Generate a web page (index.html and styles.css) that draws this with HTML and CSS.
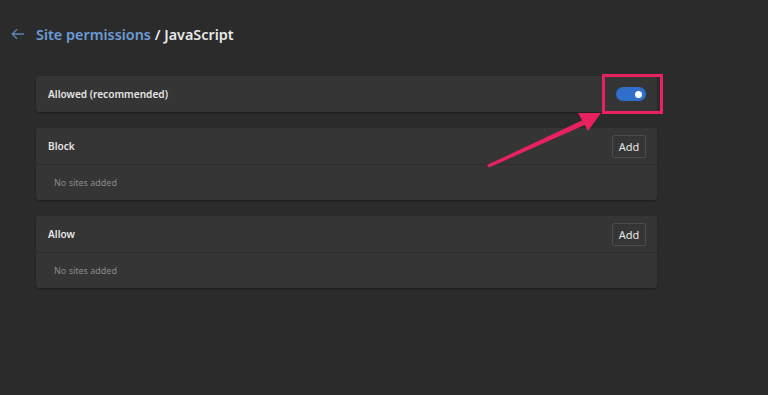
FILE: index.html
```html
<!DOCTYPE html>
<html lang="en">
<head>
  <meta charset="UTF-8">
  <meta name="viewport" content="width=device-width, initial-scale=1.0">
  <title>Site permissions / JavaScript</title>
  <link rel="stylesheet" href="styles.css">
</head>
<body>
  <div class="page">
    <div class="header">
      <span class="back">
        <svg width="14" height="12" viewBox="0 0 14 12"><path d="M13 6H1.5M6 1.2L1.2 6L6 10.8" fill="none" stroke="#5a84b8" stroke-width="1.3"/></svg>
      </span>
      <h1><span class="crumb">Site permissions</span> / JavaScript</h1>
    </div>

    <div class="card toggle-card">
      <span class="label">Allowed (recommended)</span>
      <div class="toggle-wrap">
        <div class="toggle"><span class="knob"></span></div>
      </div>
    </div>

    <div class="card">
      <div class="card-head">
        <span class="label">Block</span>
        <button class="add">Add</button>
      </div>
      <div class="empty">No sites added</div>
    </div>

    <div class="card">
      <div class="card-head">
        <span class="label">Allow</span>
        <button class="add">Add</button>
      </div>
      <div class="empty">No sites added</div>
    </div>
  </div>

  <!-- annotation arrow -->
  <svg class="arrow" width="768" height="395" viewBox="0 0 768 395">
    <polygon points="487,165 586,118.5 588,123.5 489,167.5" fill="#e8215f"/>
    <polygon points="601,113 578,113 588,131" fill="#e8215f"/>
  </svg>
</body>
</html>
```

FILE: styles.css
```css
body {
  margin: 0;
  background: #2b2b2b;
  font-family: 'Noto Sans', 'Open Sans', sans-serif;
  color: #e6e6e6;
  height: 395px;
  overflow: hidden;
}
.page {
  width: 621px;
  padding: 21px 0 0 36px;
  display: flex;
  flex-direction: column;
}
.header {
  display: flex;
  align-items: center;
  height: 26px;
  margin-left: -25px;
  margin-bottom: 29px;
}
.back {
  width: 25px;
  display: flex;
  align-items: center;
}
h1 {
  margin: 0;
  font-size: 14.4px;
  font-weight: 600;
  color: #e8e8e8;
}
.crumb {
  color: #6b9bd6;
}
.card {
  background: #353535;
  border-radius: 3px;
  box-shadow: 0 1px 2px rgba(0, 0, 0, 0.35);
  margin-bottom: 16px;
}
.label {
  font-size: 10.1px;
  font-weight: 600;
  color: #e4e4e4;
}
.toggle-card {
  height: 36px;
  display: flex;
  align-items: center;
  justify-content: space-between;
  padding-left: 12px;
  position: relative;
}
.toggle-wrap {
  margin-right: 11px;
  display: flex;
  align-items: center;
}
.toggle {
  width: 30px;
  height: 14px;
  border-radius: 7px;
  background: #2f6fca;
  position: relative;
}
.knob {
  position: absolute;
  right: 4px;
  top: 3.5px;
  width: 7px;
  height: 7px;
  border-radius: 50%;
  background: #fff;
}
.toggle-wrap::after {
  content: "";
  position: absolute;
  right: -6px;
  top: -2px;
  width: 55px;
  height: 34px;
  border: 3px solid #e8215f;
}
.card-head {
  height: 36px;
  display: flex;
  align-items: center;
  justify-content: space-between;
  padding: 0 11px 0 12px;
  border-bottom: 1px solid #2d2d2d;
}
.add {
  font-family: 'Noto Sans', 'Open Sans', sans-serif;
  font-size: 11px;
  color: #e6e6e6;
  background: #353535;
  border: 1px solid #4c4c4c;
  border-radius: 2px;
  width: 34px;
  height: 23px;
  padding: 0;
}
.empty {
  height: 35px;
  display: flex;
  align-items: center;
  padding-left: 18px;
  font-size: 9px;
  color: #8a8a8a;
}
.arrow {
  position: absolute;
  left: 0;
  top: 0;
  pointer-events: none;
}
```
